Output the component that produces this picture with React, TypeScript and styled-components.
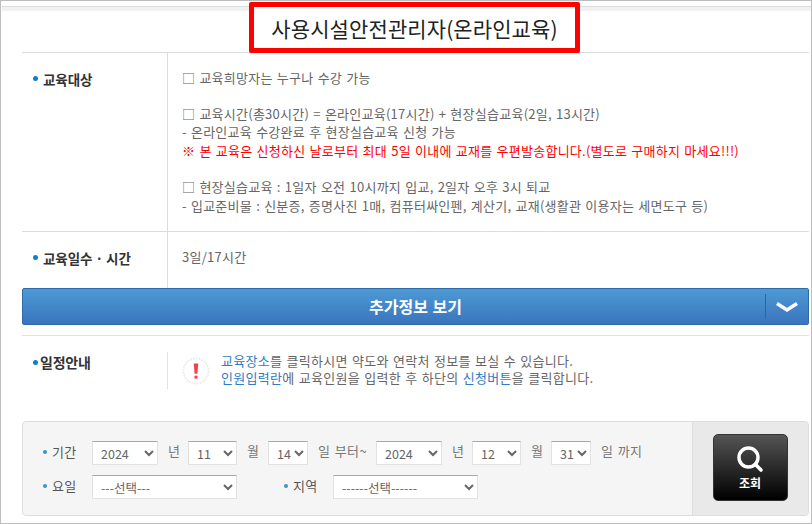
import React from "react";
import styled, { createGlobalStyle } from "styled-components";

const Global = createGlobalStyle`
  html, body { margin: 0; padding: 0; background: #fff; }
  body { font-family: "Noto Sans CJK KR", "Noto Sans", sans-serif; }
  * { box-sizing: border-box; }
`;

const Frame = styled.div`
  position: relative;
  width: 812px;
  height: 524px;
  border: 1px solid #bdbdbd;
  overflow: hidden;
  padding: 0 2px 0 21px;
`;

const TopStrip = styled.div`
  position: absolute;
  left: 1px;
  right: 0;
  top: 5px;
  height: 5px;
  background: #f1f1f1;
  border-top: 1px solid #dcdcdc;
`;

const Header = styled.header`
  position: relative;
  display: flex;
  justify-content: center;
  padding-top: 1px;
  height: 52px;
  border-bottom: 1px solid #dddddd;
`;

const Title = styled.h1`
  margin: 0 2px 0 0;
  width: 331px;
  height: 51px;
  border: 5px solid #ff0000;
  border-radius: 2px;
  background: #fff;
  display: flex;
  align-items: center;
  justify-content: center;
  padding-top: 1px;
  font-size: 21px;
  font-weight: 400;
  letter-spacing: 0.1px;
  color: #222;
`;

const Row = styled.section<{ $h: number; $line?: boolean }>`
  display: grid;
  grid-template-columns: 145px 1fr;
  height: ${(p) => p.$h}px;
  border-bottom: ${(p) => (p.$line ? "1px solid #dcdaea" : "none")};
`;

const Label = styled.div<{ $top: number }>`
  padding: ${(p) => p.$top}px 0 0 11px;
  display: flex;
  align-items: flex-start;
  gap: 5px;
  font-size: 13.5px;
  line-height: 18px;
  font-weight: 700;
  color: #333;
  letter-spacing: -0.1px;
`;

const Dot = styled.span<{ $mt: number }>`
  width: 5px;
  height: 5px;
  margin-top: ${(p) => p.$mt}px;
  border-radius: 50%;
  background: #0b80d0;
  flex: none;
`;

const Body = styled.div<{ $top: number }>`
  border-left: 1px solid #dcdaea;
  padding: ${(p) => p.$top}px 0 0 14px;
  font-size: 13px;
  line-height: 18.3px;
  color: #666;
  letter-spacing: 0.25px;
  word-spacing: 1px;
`;

const Line = styled.div`
  white-space: nowrap;
  height: 18.3px;
`;

const Alert = styled(Line)`
  color: #ff0000;
`;

const MoreBar = styled.button`
  display: flex;
  align-items: center;
  width: 100%;
  height: 37px;
  padding: 0;
  border: 1px solid #2f6aa8;
  border-radius: 2px;
  background: linear-gradient(#4d9ad4, #3a74be);
  color: #fff;
  font-family: inherit;
  font-size: 16px;
  font-weight: 700;
`;

const MoreText = styled.span`
  flex: 1;
  text-align: center;
  padding: 0 0 2px 43px;
  word-spacing: 1px;
`;

const MoreToggle = styled.span`
  width: 43px;
  height: 25px;
  border-left: 1px solid #2d64a4;
  display: flex;
  align-items: center;
  justify-content: center;
`;

const Guide = styled.section`
  display: grid;
  grid-template-columns: 145px 1fr;
  margin-top: 10px;
  border-top: 1px solid #e0dfea;
  padding-top: 16px;
`;

const GuideLabel = styled.div`
  display: flex;
  gap: 2px;
  padding: 0 0 0 11px;
  font-size: 14px;
  line-height: 20px;
  font-weight: 700;
  color: #333;
  letter-spacing: -0.2px;
`;

const GuideBody = styled.div`
  display: flex;
  align-items: center;
  gap: 11px;
  height: 37px;
  padding-left: 14px;
  border-left: 1px solid #e2e2e2;
`;

const GuideText = styled.div`
  font-size: 13px;
  line-height: 17.5px;
  margin-top: -3px;
  color: #666;
  letter-spacing: 0.3px;
  word-spacing: 1px;
  white-space: nowrap;
`;

const GuideIcon = styled.svg`
  flex: none;
`;

const Link = styled.span`
  color: #2f7cc4;
`;

const Search = styled.form`
  display: flex;
  height: 95px;
  margin-top: 32px;
  border: 1px solid #dddddd;
  border-radius: 4px;
  background: #f5f5f5;
  overflow: hidden;
`;

const Filters = styled.div`
  flex: 1;
  padding: 19px 0 0 20px;
  display: flex;
  flex-direction: column;
  gap: 10px;
`;

const FilterRow = styled.div`
  display: flex;
  align-items: center;
  height: 24px;
  font-size: 13px;
  color: #666;
`;

const FieldName = styled.span<{ $w: number; $pl?: number }>`
  display: inline-flex;
  align-items: center;
  gap: 5px;
  width: ${(p) => p.$w}px;
  padding-left: ${(p) => p.$pl ?? 0}px;
  color: #555;
  letter-spacing: 0.4px;
  margin-top: -3px;
`;

const SmallDot = styled.span`
  width: 4px;
  height: 4px;
  border-radius: 50%;
  background: #3b93c6;
`;

const Unit = styled.span<{ $w: number }>`
  width: ${(p) => p.$w}px;
  padding-left: 10px;
  white-space: nowrap;
  margin-top: -5px;
  color: #777;
  letter-spacing: 0.4px;
  word-spacing: 1px;
`;

const Select = styled.select<{ $w: number }>`
  width: ${(p) => p.$w}px;
  height: 24px;
  border: 1px solid #e2e2e2;
  border-top-color: #a8a8a8;
  background: #fff;
  color: #666;
  font-family: inherit;
  font-size: 12.5px;
  padding: 0 0 0 4px;
  border-radius: 0;
`;

const ActionPane = styled.div`
  width: 116px;
  background: #e9e9e9;
  border-left: 1px solid #dddddd;
  display: flex;
  align-items: center;
  justify-content: center;
  padding-right: 1px;
`;

const SearchButton = styled.button`
  width: 75px;
  height: 67px;
  margin-top: -2px;
  border: 1px solid #333;
  border-radius: 5px;
  background: linear-gradient(#555555, #000000);
  color: #fff;
  font-family: inherit;
  font-size: 12px;
  font-weight: 700;
  display: flex;
  flex-direction: column;
  align-items: center;
  justify-content: center;
  gap: 1px;
  padding: 0;
`;

const Opt = ({ w, v }: { w: number; v: string }) => (
  <Select $w={w} defaultValue={v}>
    <option>{v}</option>
  </Select>
);

export default function App() {
  return (
    <Frame>
      <Global />
      <TopStrip />
      <Header>
        <Title>사용시설안전관리자(온라인교육)</Title>
      </Header>
      <Row $h={179} $line>
        <Label $top={17}>
          <Dot $mt={6} />
          교육대상
        </Label>
        <Body $top={15.6}>
          <Line>□ 교육희망자는 누구나 수강 가능</Line>
          <Line />
          <Line>□ 교육시간(총30시간) = 온라인교육(17시간) + 현장실습교육(2일, 13시간)</Line>
          <Line>- 온라인교육 수강완료 후 현장실습교육 신청 가능</Line>
          <Alert>※ 본 교육은 신청하신 날로부터 최대 5일 이내에 교재를 우편발송합니다.(별도로 구매하지 마세요!!!)</Alert>
          <Line />
          <Line>□ 현장실습교육 : 1일자 오전 10시까지 입교, 2일자 오후 3시 퇴교</Line>
          <Line>- 입교준비물 : 신분증, 증명사진 1매, 컴퓨터싸인펜, 계산기, 교재(생활관 이용자는 세면도구 등)</Line>
        </Body>
      </Row>
      <Row $h={56}>
        <Label $top={17}>
          <Dot $mt={6} />
          교육일수 · 시간
        </Label>
        <Body $top={16}>3일/17시간</Body>
      </Row>
      <MoreBar type="button">
        <MoreText>추가정보 보기</MoreText>
        <MoreToggle>
          <svg width="24" height="14" viewBox="0 0 24 14">
            <path d="M2 3.5 L12 10 L22 3.5" fill="none" stroke="#fff" strokeWidth="3.4" />
          </svg>
        </MoreToggle>
      </MoreBar>
      <Guide>
        <GuideLabel>
          <Dot $mt={8} />
          일정안내
        </GuideLabel>
        <GuideBody>
          <GuideIcon width="28" height="28" viewBox="0 0 30 30">
            <circle cx="15" cy="15" r="13.5" fill="#fff" stroke="#ececec" strokeWidth="2" strokeDasharray="2 1" />
            <path d="M12.6 7 H17.4 L16.5 18 H13.5 Z" fill="#f0424a" />
            <rect x="13.4" y="20" width="3.2" height="3.2" fill="#f0424a" />
          </GuideIcon>
          <GuideText>
            <div>
              <Link>교육장소</Link>를 클릭하시면 약도와 연락처 정보를 보실 수 있습니다.
            </div>
            <div>
              <Link>인원입력란</Link>에 교육인원을 입력한 후 하단의 <Link>신청버튼</Link>을 클릭합니다.
            </div>
          </GuideText>
        </GuideBody>
      </Guide>
      <Search>
        <Filters>
          <FilterRow>
            <FieldName $w={49}>
              <SmallDot />
              기간
            </FieldName>
            <Opt w={66} v="2024" />
            <Unit $w={30}>년</Unit>
            <Opt w={49} v="11" />
            <Unit $w={31}>월</Unit>
            <Opt w={40} v="14" />
            <Unit $w={68}>일 부터~</Unit>
            <Opt w={66} v="2024" />
            <Unit $w={30}>년</Unit>
            <Opt w={49} v="12" />
            <Unit $w={30}>월</Unit>
            <Opt w={40} v="31" />
            <Unit $w={60}>일 까지</Unit>
          </FilterRow>
          <FilterRow>
            <FieldName $w={49}>
              <SmallDot />
              요일
            </FieldName>
            <Opt w={145} v="---선택---" />
            <FieldName $w={96} $pl={47}>
              <SmallDot />
              지역
            </FieldName>
            <Opt w={145} v="------선택------" />
          </FilterRow>
        </Filters>
        <ActionPane>
          <SearchButton type="button">
            <svg width="28" height="28" viewBox="0 0 28 28">
              <circle cx="12.5" cy="12.5" r="9.5" fill="none" stroke="#fff" strokeWidth="3.4" />
              <path d="M19.5 19.5 L25 25" stroke="#fff" strokeWidth="3.6" strokeLinecap="round" />
            </svg>
            조회
          </SearchButton>
        </ActionPane>
      </Search>
    </Frame>
  );
}
